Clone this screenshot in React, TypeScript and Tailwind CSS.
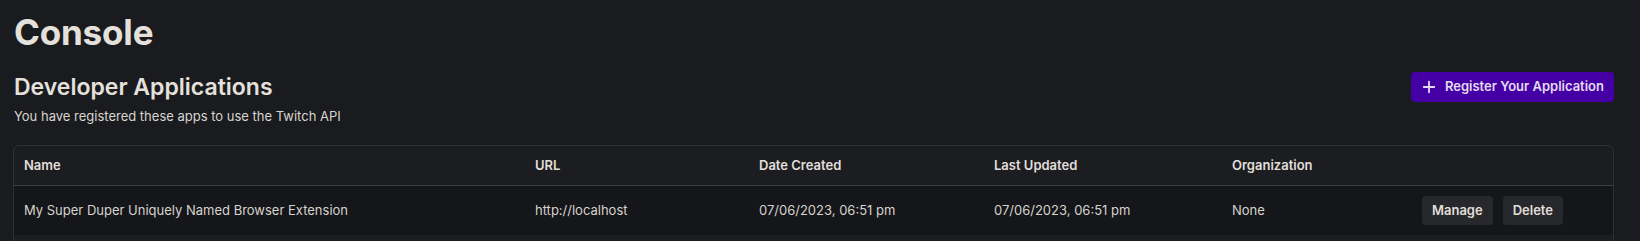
import React from 'react';
import { Plus } from 'lucide-react';

interface App {
    id: string;
    name: string;
    url: string;
    created: string;
    updated: string;
    organization: string;
}

const apps: App[] = [
    {
        id: '1',
        name: 'My Super Duper Uniquely Named Browser Extension',
        url: 'http://localhost',
        created: '07/06/2023, 06:51 pm',
        updated: '07/06/2023, 06:51 pm',
        organization: 'None',
    },
];

const columns = [
    { label: 'Name', width: 'w-[511px]' },
    { label: 'URL', width: 'w-[224px]' },
    { label: 'Date Created', width: 'w-[235px]' },
    { label: 'Last Updated', width: 'w-[238px]' },
    { label: 'Organization', width: 'w-[190px]' },
    { label: '', width: '' },
];

const App: React.FC = () => {
    return (
        <div className="min-h-screen bg-[#1a1b1e] text-[#e4e1dc] pl-[13px] pr-[26px] pt-[12px] font-['Inter','Liberation_Sans',sans-serif]">
            <h1 className="text-[35px] leading-[41px] font-bold tracking-[-0.005em] pl-px">Console</h1>

            <div className="mt-[19px] flex items-center justify-between">
                <h2 className="text-[23px] leading-[30px] font-semibold pl-px">Developer Applications</h2>
                <button className="h-[30px] bg-[#4500a5] text-[#e2dcef] rounded-[4px] pl-[9px] pr-[10px] flex items-center gap-[7px] text-[13px] font-semibold">
                    <Plus size={18} strokeWidth={2.4} />
                    Register Your Application
                </button>
            </div>
            <p className="mt-[5px] text-[13px] leading-[18px] text-[#d8d5d0] pl-px">You have registered these apps to use the Twitch API</p>

            <div className="mt-[20px] border border-[#2f3034] rounded-[6px] bg-[#1c1d20] overflow-hidden pb-3">
                <table className="w-full table-fixed text-[13px] text-left">
                    <thead>
                        <tr className="h-[39px] border-b border-[#3d3e41]">
                            {columns.map((c, i) => (
                                <th key={i} className={`${c.width} px-[10px] font-semibold text-[#e1dfdb]`}>{c.label}</th>
                            ))}
                        </tr>
                    </thead>
                    <tbody>
                        {apps.map(app => (
                            <tr key={app.id} className="h-[50px] bg-[#151619] text-[#d6d3ce]">
                                <td className="px-[10px]">{app.name}</td>
                                <td className="px-[10px]">{app.url}</td>
                                <td className="px-[10px]">{app.created}</td>
                                <td className="px-[10px]">{app.updated}</td>
                                <td className="px-[10px]">{app.organization}</td>
                                <td className="px-[10px]">
                                    <div className="flex gap-[10px]">
                                        <button className="h-[29px] px-[10px] rounded-[4px] bg-[#26282b] font-semibold text-[#e1dfdb]">Manage</button>
                                        <button className="h-[29px] px-[10px] rounded-[4px] bg-[#26282b] font-semibold text-[#e1dfdb]">Delete</button>
                                    </div>
                                </td>
                            </tr>
                        ))}
                    </tbody>
                </table>
            </div>
        </div>
    );
};

export default App;
